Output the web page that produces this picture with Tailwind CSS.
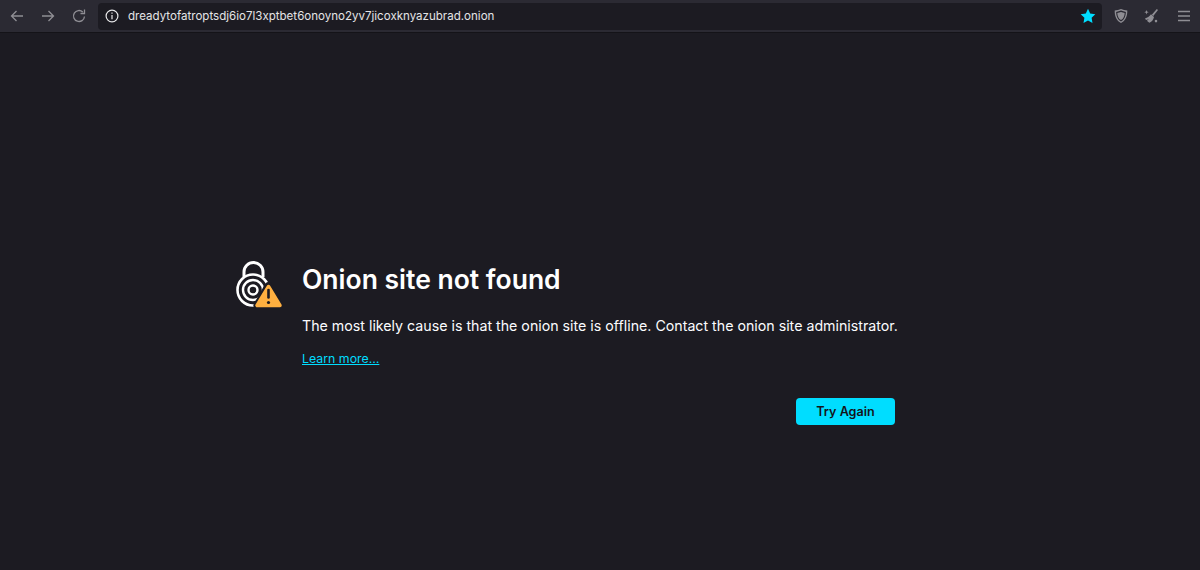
<!DOCTYPE html>
<html lang="en">
<head>
  <meta charset="UTF-8" />
  <title>Problem loading page</title>
  <script src="https://cdn.jsdelivr.net/npm/@tailwindcss/browser@4"></script>
</head>
<body class="bg-[#1c1b22] h-[570px] overflow-hidden font-['Inter',sans-serif] text-white">
  <!-- toolbar -->
  <div class="h-[33px] bg-[#2b2a33] border-b border-[#141318] flex items-center">
    <div class="w-[98px] pl-[9px] flex items-center gap-[15px] text-[#8f8e94]">
      <svg class="w-4 h-4" viewBox="0 0 16 16" fill="none" stroke="currentColor" stroke-width="1.3"><path d="M14 8H2.500M7.500 3l-5 5 5 5"/></svg>
      <svg class="w-4 h-4" viewBox="0 0 16 16" fill="none" stroke="currentColor" stroke-width="1.3"><path d="M2 8h11.500M8.500 3l5 5-5 5"/></svg>
      <svg class="w-4 h-4" viewBox="0 0 16 16" fill="none" stroke="currentColor" stroke-width="1.3"><path d="M13.500 8.500A5.500 5.500 0 1 1 11.800 4M13.500 1.500V5.500H9.500"/></svg>
    </div>
    <div class="w-[1004px] h-[27px] bg-[#1c1b22] rounded-[4px] flex items-center pl-[7px] pr-[6px]">
      <svg class="w-[14px] h-[14px] text-[#e8e8ea]" viewBox="0 0 14 14" fill="none" stroke="currentColor" stroke-width="1.200"><circle cx="7" cy="7" r="5.900"/><path d="M7 6v4.300M7 3.500v1.300"/></svg>
      <span class="ml-[9px] pt-[1px] text-[11.560px] text-[#e4e4e6]">dreadytofatroptsdj6io7l3xptbet6onoyno2yv7jicoxknyazubrad.onion</span>
      <svg class="ml-auto w-[16px] h-[16px] text-[#00ddff]" viewBox="0 0 16 16" fill="currentColor"><path d="M8 .8l2.200 4.700 5.100.7-3.700 3.600.9 5.100L8 12.500l-4.500 2.400.9-5.100L.7 6.200l5.100-.7z"/></svg>
    </div>
    <div class="flex-1 flex items-center pl-[11px] gap-[14px] text-[#8f8e94]">
      <svg class="w-4 h-4" viewBox="0 0 16 16" fill="currentColor"><path fill-rule="evenodd" d="M8 1c2 .9 4 1.400 6.300 1.500C14.500 8 12.500 13 8 15 3.500 13 1.500 8 1.700 2.500 4 2.400 6 1.900 8 1zM8 2.600C6.400 3.300 4.800 3.700 3.100 3.900 3.200 8 4.800 11.800 8 13.500c3.200-1.700 4.800-5.500 4.900-9.600C11.200 3.700 9.600 3.300 8 2.600z"/><path d="M8 4c1.200.5 2.400.8 3.700.9-.1 3-1.300 5.800-3.700 7.200-2.400-1.400-3.600-4.200-3.700-7.200C5.600 4.800 6.800 4.500 8 4z"/></svg>
      <svg class="w-4 h-4" viewBox="0 0 16 16" fill="currentColor"><path d="M13.800 1l1.200 1-4.700 6-1.500-1.300z"/><path d="M8 6.300l3 2.600c-.5 2.600-2 4.500-4.600 5.800-1-.5-1.800-1.100-2.500-1.900l2-1.600-2.900.7-1-1.500C4.300 10 6.400 8.500 8 6.300z"/><path d="M3.500 2l.6 1.600 1.600.6-1.600.6-.6 1.700-.6-1.700-1.600-.6 1.600-.6zM13 11.800a1.300 1.300 0 1 1 0 2.600 1.300 1.300 0 0 1 0-2.600z"/></svg>
      <svg class="ml-[3px] w-4 h-4" viewBox="0 0 16 16" fill="none" stroke="currentColor" stroke-width="1.400"><path d="M2 3.500h12M2 8h12M2 12.500h12"/></svg>
    </div>
  </div>
  <!-- error page -->
  <div class="flex pl-[236px] pt-[227px]">
    <svg class="w-[47px] h-[48px] mt-[1px] shrink-0" viewBox="0 0 47 48" fill="none">
      <path d="M8 16V11a9.500 9.500 0 0 1 19 0v5" stroke="#fff" stroke-width="3"/>
      <circle cx="17" cy="29" r="15.500" stroke="#fff" stroke-width="2.600"/>
      <circle cx="17" cy="29" r="10" stroke="#fff" stroke-width="2.400"/>
      <circle cx="17" cy="29" r="4.500" stroke="#fff" stroke-width="2.400"/>
      <path d="M32.500 25 21.500 44.500h22z" fill="#1c1b22" stroke="#1c1b22" stroke-width="8" stroke-linejoin="round"/>
      <path d="M32.500 25.500 21 44.500h23z" fill="#ffb040" stroke="#ffb040" stroke-width="3.500" stroke-linejoin="round"/>
      <path d="M32.500 29v7.500" stroke="#1c1b22" stroke-width="2.600" stroke-linecap="round"/>
      <circle cx="32.500" cy="41.500" r="1.600" fill="#1c1b22"/>
    </svg>
    <div class="ml-[19px] w-[593px]">
      <h1 class="text-[26.500px] leading-[36px] mt-[1px] font-semibold">Onion site not found</h1>
      <p class="mt-[19px] text-[14.210px] leading-[20px] text-[#fbfbfe] whitespace-nowrap">The most likely cause is that the onion site is offline. Contact the onion site administrator.</p>
      <a href="#" class="block mt-[14px] text-[12.350px] leading-[18px] text-[#00ddff] underline">Learn more…</a>
      <div class="flex justify-end mt-[30px]">
        <button class="w-[99px] h-[27px] pt-[1px] bg-[#00ddff] rounded-[4px] text-[12.600px] font-semibold text-[#15141a]">Try Again</button>
      </div>
    </div>
  </div>
</body>
</html>
